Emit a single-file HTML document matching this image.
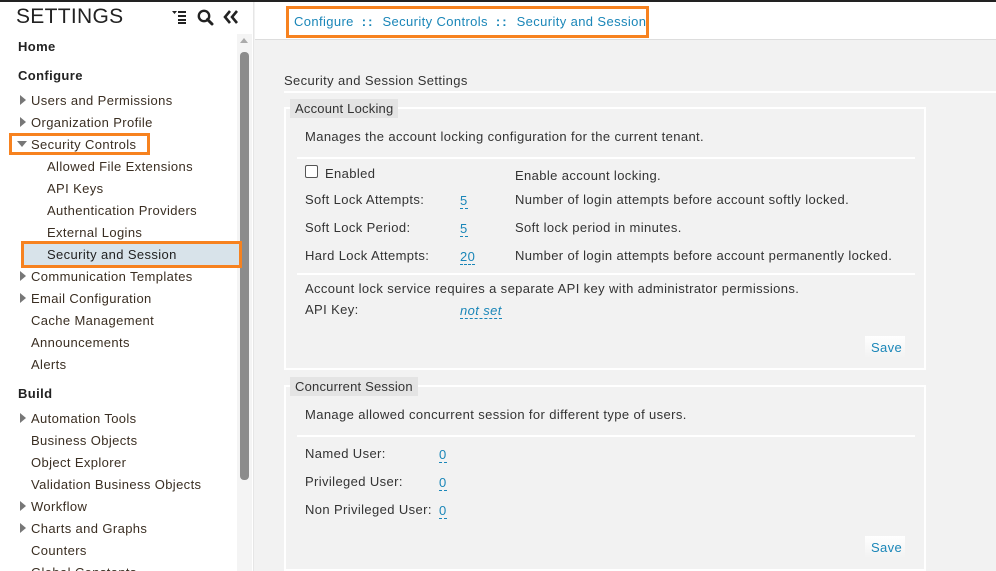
<!DOCTYPE html>
<html><head><meta charset="utf-8"><style>
*{margin:0;padding:0;box-sizing:border-box}
html,body{width:996px;height:571px;overflow:hidden}
body{background:#f2f2f2;font-family:"Liberation Sans",sans-serif;font-size:13px;color:#333;position:relative;letter-spacing:.38px}
.a{position:absolute;white-space:nowrap}
.t{margin-top:1px}
#top{left:0;top:0;width:996px;height:2px;background:#222}
#side{left:0;top:2px;width:254px;height:569px;background:#fff;border-right:1px solid #e6e6e6}
.si{position:absolute;white-space:nowrap;color:#3a2e22;font-size:13px;margin-top:1px}
.b{font-weight:bold;color:#222}
.tri{position:absolute;width:0;height:0;border-top:5px solid transparent;border-bottom:5px solid transparent;border-left:6px solid #777}
.trd{position:absolute;width:0;height:0;border-left:5px solid transparent;border-right:5px solid transparent;border-top:6px solid #777}
.box{position:absolute;border:2px solid #fff}
.leg{position:absolute;background:#e4e4e4;padding:2px 5px;font-size:13px;color:#333;letter-spacing:.2px}
.ln{position:absolute;height:2px;background:#fff}
.v{color:#1a86b8;border-bottom:1px dashed #1a86b8;position:absolute;white-space:nowrap;line-height:15px}
.lk{color:#1a86b8}
.save{position:absolute;background:linear-gradient(#fff,#f2f2f2);color:#1a86b8;padding:2px 6px;width:40px;height:22px;text-align:center;line-height:20px}
.sep{display:inline-block;margin:0 8px;letter-spacing:2px;font-weight:bold}
</style></head><body>
<div class="a" id="top"></div>
<div class="a" id="side"></div>
<div class="a" style="left:16px;top:5px;font-size:21px;color:#222;letter-spacing:.3px">SETTINGS</div>
<svg class="a" style="left:172px;top:10px" width="16" height="14" viewBox="0 0 16 14"><path d="M0 1h5l-2.5 3z" fill="#222"/><rect x="6" y="1" width="8" height="2" fill="#222"/><rect x="6" y="5" width="8" height="2" fill="#222"/><rect x="6" y="9" width="8" height="2" fill="#222"/><rect x="6" y="12" width="8" height="2" fill="#222"/></svg>
<svg class="a" style="left:197px;top:9px" width="17" height="17" viewBox="0 0 17 17"><circle cx="7" cy="7" r="5.2" fill="none" stroke="#222" stroke-width="2.4"/><path d="M10.5 10.5l4.5 4.5" stroke="#222" stroke-width="3" stroke-linecap="round"/></svg>
<svg class="a" style="left:223px;top:10px" width="16" height="14" viewBox="0 0 16 14"><path d="M7 1L2 7l5 6M14 1L9 7l5 6" fill="none" stroke="#222" stroke-width="2.6"/></svg>
<div class="a" style="left:237px;top:34px;width:15px;height:537px;background:#f4f4f4"></div>
<div class="a" style="left:240px;top:38px;width:0;height:0;border-left:4px solid transparent;border-right:4px solid transparent;border-bottom:5px solid #aaa"></div>
<div class="a" style="left:240px;top:52px;width:9px;height:428px;background:#8c8c8c;border-radius:4px"></div>
<div class="si b" style="left:18px;top:38px">Home</div>
<div class="si b" style="left:18px;top:67px">Configure</div>
<div class="tri" style="left:20px;top:95px"></div><div class="si" style="left:31px;top:92px">Users and Permissions</div>
<div class="tri" style="left:20px;top:117px"></div><div class="si" style="left:31px;top:114px">Organization Profile</div>
<div class="a" style="left:9px;top:133px;width:141px;height:22px;border:3px solid #f7821f"></div>
<div class="trd" style="left:17px;top:141px"></div><div class="si" style="left:31px;top:136px">Security Controls</div>
<div class="si" style="left:47px;top:158px">Allowed File Extensions</div>
<div class="si" style="left:47px;top:180px">API Keys</div>
<div class="si" style="left:47px;top:202px">Authentication Providers</div>
<div class="si" style="left:47px;top:224px">External Logins</div>
<div class="a" style="left:21px;top:241px;width:221px;height:27px;border:3px solid #f7821f;background:#d8e3ea"></div>
<div class="si" style="left:47px;top:246px;color:#222">Security and Session</div>
<div class="tri" style="left:20px;top:271px"></div><div class="si" style="left:31px;top:268px">Communication Templates</div>
<div class="tri" style="left:20px;top:293px"></div><div class="si" style="left:31px;top:290px">Email Configuration</div>
<div class="si" style="left:31px;top:312px">Cache Management</div>
<div class="si" style="left:31px;top:334px">Announcements</div>
<div class="si" style="left:31px;top:356px">Alerts</div>
<div class="si b" style="left:18px;top:385px">Build</div>
<div class="tri" style="left:20px;top:413px"></div><div class="si" style="left:31px;top:410px">Automation Tools</div>
<div class="si" style="left:31px;top:432px">Business Objects</div>
<div class="si" style="left:31px;top:454px">Object Explorer</div>
<div class="si" style="left:31px;top:476px">Validation Business Objects</div>
<div class="tri" style="left:20px;top:501px"></div><div class="si" style="left:31px;top:498px">Workflow</div>
<div class="tri" style="left:20px;top:523px"></div><div class="si" style="left:31px;top:520px">Charts and Graphs</div>
<div class="si" style="left:31px;top:542px">Counters</div>
<div class="si" style="left:31px;top:564px">Global Constants</div>
<div class="a" style="left:255px;top:2px;width:741px;height:38px;background:#fff;border-bottom:1px solid #ddd"></div>
<div class="a" style="left:286px;top:6px;width:363px;height:32px;border:3px solid #f7821f;background:#fff"></div>
<div class="a lk t" style="left:294px;top:13px">Configure<span class="sep">::</span>Security Controls<span class="sep">::</span>Security and Session</div>
<div class="a t" style="left:284px;top:72px;color:#333">Security and Session Settings</div>
<div class="ln" style="left:284px;top:91px;width:712px"></div>
<div class="box" style="left:284px;top:107px;width:642px;height:263px"></div>
<div class="leg" style="left:290px;top:99px">Account Locking</div>
<div class="a t" style="left:305px;top:128px">Manages the account locking configuration for the current tenant.</div>
<div class="ln" style="left:297px;top:157px;width:618px"></div>
<div class="a" style="left:305px;top:165px;width:13px;height:13px;border:1px solid #555;border-radius:2px;background:#fff"></div>
<div class="a t" style="left:325px;top:165px">Enabled</div>
<div class="a t" style="left:515px;top:167px">Enable account locking.</div>
<div class="a t" style="left:305px;top:191px">Soft Lock Attempts:</div><div class="v t" style="left:460px;top:192px">5</div><div class="a t" style="left:515px;top:191px">Number of login attempts before account softly locked.</div>
<div class="a t" style="left:305px;top:219px">Soft Lock Period:</div><div class="v t" style="left:460px;top:220px">5</div><div class="a t" style="left:515px;top:219px">Soft lock period in minutes.</div>
<div class="a t" style="left:305px;top:247px">Hard Lock Attempts:</div><div class="v t" style="left:460px;top:248px">20</div><div class="a t" style="left:515px;top:247px">Number of login attempts before account permanently locked.</div>
<div class="ln" style="left:297px;top:273px;width:618px"></div>
<div class="a t" style="left:305px;top:280px">Account lock service requires a separate API key with administrator permissions.</div>
<div class="a t" style="left:305px;top:301px">API Key:</div><div class="v t" style="left:460px;top:302px;font-style:italic">not set</div>
<div class="save t" style="left:865px;top:335px">Save</div>
<div class="box" style="left:284px;top:385px;width:642px;height:186px"></div>
<div class="leg" style="left:290px;top:377px">Concurrent Session</div>
<div class="a t" style="left:305px;top:406px">Manage allowed concurrent session for different type of users.</div>
<div class="ln" style="left:297px;top:435px;width:618px"></div>
<div class="a t" style="left:305px;top:445px">Named User:</div><div class="v t" style="left:439px;top:446px">0</div>
<div class="a t" style="left:305px;top:473px">Privileged User:</div><div class="v t" style="left:439px;top:474px">0</div>
<div class="a t" style="left:305px;top:501px">Non Privileged User:</div><div class="v t" style="left:439px;top:502px">0</div>
<div class="save t" style="left:865px;top:535px">Save</div>
</body></html>
